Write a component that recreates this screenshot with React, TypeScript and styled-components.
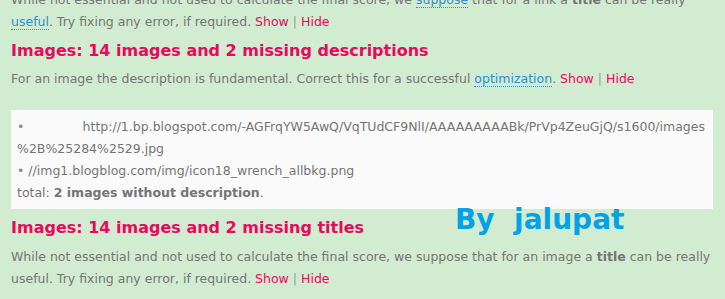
import React from "react";
import styled, { createGlobalStyle } from "styled-components";

const Global = createGlobalStyle`
  html, body { margin: 0; padding: 0; }
  body {
    background: #d1ecd0;
    width: 725px;
    height: 299px;
    overflow: hidden;
    font-family: "DejaVu Sans", Verdana, sans-serif;
  }
`;

const Page = styled.div`
  position: relative;
  width: 725px;
  height: 299px;
  overflow: hidden;
  padding: 0 12px 0 11px;
  box-sizing: border-box;
`;

const Content = styled.div`
  margin-top: -11px;
`;

const Para = styled.p<{ $top?: number }>`
  margin: ${(p) => p.$top ?? 0}px 0 0 0;
  font-size: 12.5px;
  line-height: 22px;
  color: #757575;
`;

const Heading = styled.h3<{ $top: number }>`
  margin: ${(p) => p.$top}px 0 0 0;
  font-size: 16px;
  line-height: 24px;
  font-weight: bold;
  color: #e8085f;
`;

const Link = styled.a`
  color: #2e8fd6;
  text-decoration: none;
  border-bottom: 1px dotted #2e8fd6;
`;

const Toggle = styled.span`
  color: #e8085f;
`;

const Bar = styled.span`
  color: #999;
`;

const Box = styled.div`
  margin-top: 20px;
  background: #fafafa;
  padding: 6px 8px 5px 6px;
`;

const BoxLine = styled.div<{ $justify?: boolean }>`
  font-size: 12.5px;
  line-height: 22px;
  color: #757575;
  text-align: ${(p) => (p.$justify ? "justify" : "left")};
  text-align-last: ${(p) => (p.$justify ? "justify" : "auto")};
`;

const Bullet = styled.span`
  color: #8a8a8a;
`;

const Signature = styled.div`
  position: absolute;
  left: 455px;
  top: 202px;
  font-family: "DejaVu Sans", Tahoma, sans-serif;
  font-weight: bold;
  font-size: 28px;
  line-height: 36px;
  color: #02a2e6;
  white-space: pre;
`;

const ShowHide = () => (
  <>
    <Toggle>Show</Toggle> <Bar>|</Bar> <Toggle>Hide</Toggle>
  </>
);

export default function App() {
  return (
    <>
      <Global />
      <Page>
        <Content>
          <Para>
            While not essential and not used to calculate the final score, we{" "}
            <Link>suppose</Link> that for a link a <b>title</b> can be really{" "}
            <Link>useful</Link>. Try fixing any error, if required. <ShowHide />
          </Para>
          <Heading $top={6}>Images: 14 images and 2 missing descriptions</Heading>
          <Para $top={5}>
            For an image the description is fundamental. Correct this for a successful{" "}
            <Link>optimization</Link>. <ShowHide />
          </Para>
          <Box>
            <BoxLine $justify>
              <Bullet>•</Bullet>{" "}
              http://1.bp.blogspot.com/-AGFrqYW5AwQ/VqTUdCF9NlI/AAAAAAAAABk/PrVp4ZeuGjQ/s1600/images
            </BoxLine>
            <BoxLine>%2B%25284%2529.jpg</BoxLine>
            <BoxLine>
              <Bullet>•</Bullet> //img1.blogblog.com/img/icon18_wrench_allbkg.png
            </BoxLine>
            <BoxLine>
              total: <b>2 images without description</b>.
            </BoxLine>
          </Box>
          <Heading $top={7}>Images: 14 images and 2 missing titles</Heading>
          <Para $top={6}>
            While not essential and not used to calculate the final score, we suppose that
            for an image a <b>title</b> can be really useful. Try fixing any error, if
            required. <ShowHide />
          </Para>
        </Content>
        <Signature>{"By  jalupat"}</Signature>
      </Page>
    </>
  );
}
